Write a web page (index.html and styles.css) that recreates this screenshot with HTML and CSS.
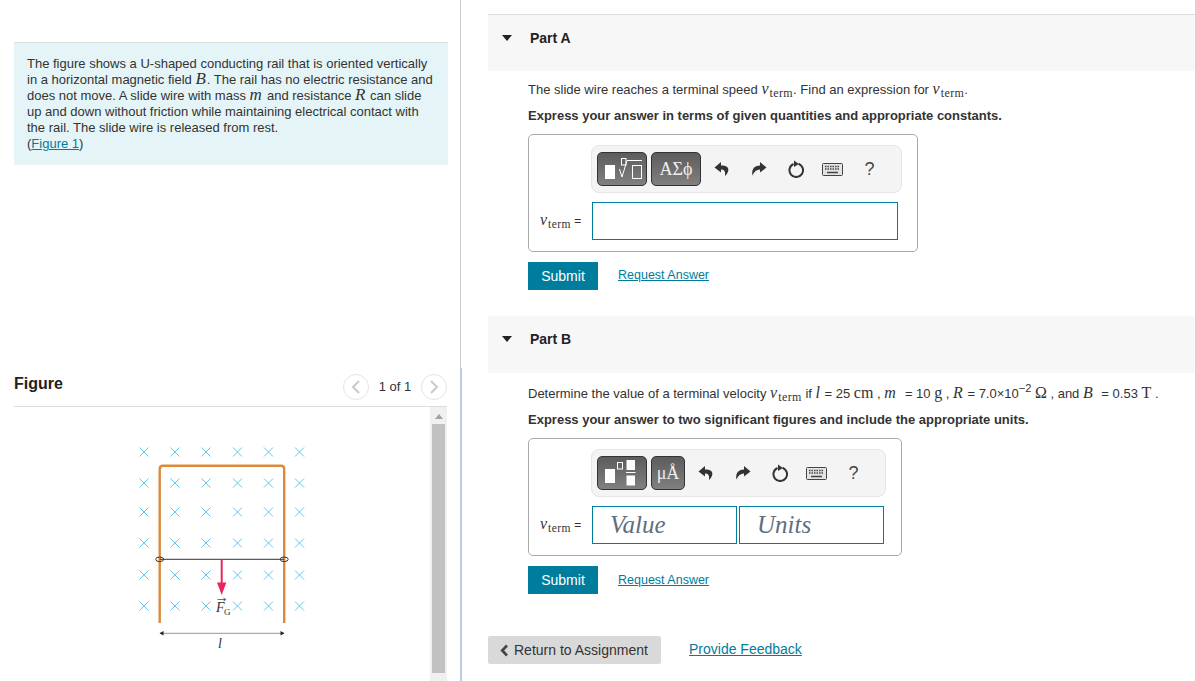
FILE: index.html
```html
<!DOCTYPE html>
<html lang="en">
<head>
    <meta charset="UTF-8">
    <title>Part A and Part B</title>
    <link rel="stylesheet" href="styles.css">
</head>
<body>
    <div class="left">
        <div class="intro-pane">
            <div class="intro">
                The figure shows a U-shaped conducting rail that is oriented vertically<br>
                in a horizontal magnetic field <i class="math big">B</i>. The rail has no electric resistance and<br>
                does not move. A slide wire with mass <i class="math big wide-m">m</i> and resistance <i class="math big">R</i> can slide<br>
                up and down without friction while maintaining electrical contact with<br>
                the rail. The slide wire is released from rest.<br>
                (<a href="#">Figure 1</a>)
            </div>
        </div>
        <div class="figure-pane">
            <div class="figure-head">
                <h2>Figure</h2>
                <div class="pager">
                    <span class="pager-btn"><svg width="10" height="14" viewBox="0 0 10 14"><path d="M8 1 L2 7 L8 13" fill="none" stroke="#c9c9c9" stroke-width="2"/></svg></span>
                    <span class="pager-text">1 of 1</span>
                    <span class="pager-btn"><svg width="10" height="14" viewBox="0 0 10 14"><path d="M2 1 L8 7 L2 13" fill="none" stroke="#c9c9c9" stroke-width="2"/></svg></span>
                </div>
            </div>
            <div class="figure-body">
                <div class="figure-canvas">
                    <svg class="rail-figure" width="200" height="230" viewBox="120 430 200 230">
                        <defs>
                            <path id="x" d="M-4.5 -4.5 L4.5 4.5 M4.5 -4.5 L-4.5 4.5" stroke="#62c8ee" stroke-width="1" fill="none"/>
                        </defs>
                        <g id="crosses">
                            <use href="#x" x="144" y="452"/><use href="#x" x="175" y="452"/><use href="#x" x="206" y="452"/><use href="#x" x="237.500" y="452"/><use href="#x" x="268.500" y="452"/><use href="#x" x="299.500" y="452"/>
                            <use href="#x" x="144" y="483"/><use href="#x" x="175" y="483"/><use href="#x" x="206" y="483"/><use href="#x" x="237.500" y="483"/><use href="#x" x="268.500" y="483"/><use href="#x" x="299.500" y="483"/>
                            <use href="#x" x="144" y="512"/><use href="#x" x="175" y="512"/><use href="#x" x="206" y="512"/><use href="#x" x="237.500" y="512"/><use href="#x" x="268.500" y="512"/><use href="#x" x="299.500" y="512"/>
                            <use href="#x" x="144" y="543"/><use href="#x" x="175" y="543"/><use href="#x" x="206" y="543"/><use href="#x" x="237.500" y="543"/><use href="#x" x="268.500" y="543"/><use href="#x" x="299.500" y="543"/>
                            <use href="#x" x="144" y="575"/><use href="#x" x="175" y="575"/><use href="#x" x="206" y="575"/><use href="#x" x="237.500" y="575"/><use href="#x" x="268.500" y="575"/><use href="#x" x="299.500" y="575"/>
                            <use href="#x" x="144" y="606"/><use href="#x" x="175" y="606"/><use href="#x" x="206" y="606"/><use href="#x" x="237.500" y="606"/><use href="#x" x="268.500" y="606"/><use href="#x" x="299.500" y="606"/>
                        </g>
                        <path d="M159.700 623 V469 Q159.700 465.800 163 465.800 H281 Q284.200 465.800 284.200 469 V623" fill="none" stroke="#dd8a3c" stroke-width="2.400"/>
                        <path d="M159.700 559.300 H284.200" stroke="#333" stroke-width="1"/>
                        <ellipse cx="159.700" cy="559.300" rx="4" ry="2.300" fill="none" stroke="#333" stroke-width="1"/>
                        <ellipse cx="284.200" cy="559.300" rx="4" ry="2.300" fill="none" stroke="#333" stroke-width="1"/>
                        <path d="M221.700 559.500 V583" stroke="#e8265e" stroke-width="2"/>
                        <path d="M217 582.500 H226.400 L221.700 595 Z" fill="#e8265e"/>
                        <path d="M160 633.300 H284" stroke="#999" stroke-width="1"/>
                        <path d="M159.500 633.300 L163.500 631 V635.600 Z M284.500 633.300 L280.500 631 V635.600 Z" fill="#222"/>
                        <path d="M217.500 599.500 H225 M223.500 598 L226 599.500 L223.500 601" fill="none" stroke="#333" stroke-width="0.700"/>
                        <text class="fig-f" x="216" y="612">F</text>
                        <text class="fig-g" x="224" y="615">G</text>
                        <text class="fig-f" x="218" y="648">l</text>
                    </svg>
                </div>
                <div class="scrollbar">
                    <span class="scroll-up"></span>
                    <span class="scroll-thumb"></span>
                </div>
            </div>
        </div>
    </div>

    <div class="right">
        <div class="part-head part-a">
            <span class="caret"></span>
            <h3>Part A</h3>
        </div>
        <div class="part-body">
            <p class="question">The slide wire reaches a terminal speed <i class="math">v</i><sub class="term">term</sub>. Find an expression for <i class="math">v</i><sub class="term">term</sub>.</p>
            <p class="instruction">Express your answer in terms of given quantities and appropriate constants.</p>
            <div class="answer-box box-a">
                <div class="toolbar toolbar-a">
                    <span class="tool-btn wide">
                        <svg width="50" height="34" viewBox="0 0 50 34"><rect x="8" y="13" width="10" height="14" fill="#fff"/><rect x="24.500" y="6.500" width="4.500" height="6.500" fill="none" stroke="#fff"/><path d="M22.500 17 L25 25 L30 8.500 H45" fill="none" stroke="#fff"/><rect x="35.500" y="13.500" width="9" height="13" fill="none" stroke="#fff"/></svg>
                    </span>
                    <span class="tool-btn greek">ΑΣϕ</span>
                    <span class="tool-icons">
                        <span class="slot"><svg width="16" height="16" viewBox="0 0 16 16"><path d="M7 1 L0.500 6.500 L7 11.500 V8.500 C10.500 8.500 11.500 10.500 11 15 C14 12.500 15 9 14 7 C13 5 10 4.500 7 4.500 Z" fill="#333"/></svg></span>
                        <span class="slot"><svg width="16" height="16" viewBox="0 0 16 16"><path d="M9 1 L15.500 6.500 L9 11.500 V8.500 C5.500 8.500 3 10.500 1.500 14.500 C0.500 10 2 4.500 9 4.500 Z" fill="#333"/></svg></span>
                        <span class="slot"><svg width="18" height="18" viewBox="0 0 18 18"><path d="M6.500 4 A6.800 6.800 0 1 0 11.500 3.800" fill="none" stroke="#333" stroke-width="2"/><path d="M7 0.500 L11.800 4 L7 7 Z" fill="#333"/></svg></span>
                        <span class="slot"><svg width="21" height="13" viewBox="0 0 21 13"><rect x="0.500" y="0.500" width="20" height="12" rx="1" fill="#e4e4e4" stroke="#444"/><path d="M3 3.500 H18 M3 6 H18" stroke="#444" stroke-dasharray="1.500 1" stroke-width="1.500"/><path d="M5 9.500 H16" stroke="#444" stroke-width="1.500"/></svg></span>
                        <span class="slot help">?</span>
                    </span>
                </div>
                <div class="answer-row">
                    <label class="var-label"><i class="math">v</i><sub class="term">term</sub> =</label>
                    <span class="input input-full"></span>
                </div>
            </div>
            <div class="actions">
                <button class="submit">Submit</button>
                <a class="request" href="#">Request Answer</a>
            </div>
        </div>

        <div class="part-head part-b">
            <span class="caret"></span>
            <h3>Part B</h3>
        </div>
        <div class="part-body">
            <p class="question q-b">Determine the value of a terminal velocity <i class="math">v</i><sub class="term">term</sub> if <i class="math">l</i> = 25 <span class="unit">cm</span> , <i class="math wide-m gap">m</i> = 10 <span class="unit">g</span> , <i class="math">R</i> = 7.0×10<sup class="exp">−2</sup> <span class="unit">Ω</span> , and <i class="math gap">B</i> = 0.53 <span class="unit">T</span> .</p>
            <p class="instruction">Express your answer to two significant figures and include the appropriate units.</p>
            <div class="answer-box box-b">
                <div class="toolbar toolbar-b">
                    <span class="tool-btn wide">
                        <svg width="50" height="34" viewBox="0 0 50 34"><rect x="8" y="13" width="10" height="14" fill="#fff"/><rect x="20.500" y="6.500" width="5" height="6.500" fill="none" stroke="#fff"/><rect x="29.500" y="4" width="8.500" height="10" fill="#fff"/><path d="M29 16.500 H38.500" stroke="#fff"/><rect x="29.500" y="19.500" width="8.500" height="10" fill="#fff"/></svg>
                    </span>
                    <span class="tool-btn units-btn">μÅ</span>
                    <span class="tool-icons">
                        <span class="slot"><svg width="16" height="16" viewBox="0 0 16 16"><path d="M7 1 L0.500 6.500 L7 11.500 V8.500 C10.500 8.500 11.500 10.500 11 15 C14 12.500 15 9 14 7 C13 5 10 4.500 7 4.500 Z" fill="#333"/></svg></span>
                        <span class="slot"><svg width="16" height="16" viewBox="0 0 16 16"><path d="M9 1 L15.500 6.500 L9 11.500 V8.500 C5.500 8.500 3 10.500 1.500 14.500 C0.500 10 2 4.500 9 4.500 Z" fill="#333"/></svg></span>
                        <span class="slot"><svg width="18" height="18" viewBox="0 0 18 18"><path d="M6.500 4 A6.800 6.800 0 1 0 11.500 3.800" fill="none" stroke="#333" stroke-width="2"/><path d="M7 0.500 L11.800 4 L7 7 Z" fill="#333"/></svg></span>
                        <span class="slot"><svg width="21" height="13" viewBox="0 0 21 13"><rect x="0.500" y="0.500" width="20" height="12" rx="1" fill="#e4e4e4" stroke="#444"/><path d="M3 3.500 H18 M3 6 H18" stroke="#444" stroke-dasharray="1.500 1" stroke-width="1.500"/><path d="M5 9.500 H16" stroke="#444" stroke-width="1.500"/></svg></span>
                        <span class="slot help">?</span>
                    </span>
                </div>
                <div class="answer-row">
                    <label class="var-label"><i class="math">v</i><sub class="term">term</sub> =</label>
                    <span class="input input-half">Value</span>
                    <span class="input input-half">Units</span>
                </div>
            </div>
            <div class="actions actions-b">
                <button class="submit">Submit</button>
                <a class="request" href="#">Request Answer</a>
            </div>
        </div>

        <div class="footer">
            <button class="return"><svg width="9" height="13" viewBox="0 0 9 13"><path d="M7 1.500 L2.200 6.500 L7 11.500" fill="none" stroke="#444" stroke-width="2.600"/></svg>Return to Assignment</button>
            <a class="feedback" href="#">Provide Feedback</a>
        </div>
    </div>
</body>
</html>
```

FILE: styles.css
```css
html, body {
    height: 681px;
    overflow: hidden;
}

body {
    margin: 0;
    display: flex;
    font-family: 'Liberation Sans', Arial, sans-serif;
    font-size: 13px;
    color: #333;
    background-color: #fff;
}

a {
    color: #007c9c;
    text-decoration: underline;
}

.math {
    font-family: 'Liberation Serif', serif;
    font-style: italic;
    font-size: 16px;
    line-height: 0;
    padding-right: 1px;
}

.math.big {
    font-size: 17px;
}

.wide-m {
    letter-spacing: 0.5px;
}

.gap {
    margin-right: 4px;
}

.term {
    font-family: 'Liberation Serif', serif;
    font-size: 12px;
    line-height: 0;
    vertical-align: -3px;
    letter-spacing: 0.4px;
}

.unit {
    font-family: 'Liberation Serif', serif;
    font-size: 16px;
    line-height: 0;
}

.exp {
    font-size: 11px;
    line-height: 0;
    vertical-align: 6px;
}

/* left column */
.left {
    width: 462px;
    flex: none;
}

.intro-pane {
    height: 326px;
    padding: 42px 0 0 14px;
    border-right: 1px solid #ccc;
    width: 446px;
}

.intro {
    width: 408px;
    padding: 13px 13px 13px;
    background-color: #e5f5f7;
    border-top: 1px solid #dcdcdc;
    line-height: 16px;
    white-space: nowrap;
}

.figure-pane {
    height: 313px;
    width: 446px;
    padding-left: 14px;
    border-right: 2px solid #b9cde3;
}

.figure-head {
    width: 433px;
    height: 38px;
    display: flex;
    justify-content: space-between;
    border-bottom: 1px solid #ddd;
}

.figure-head h2 {
    margin: 6px 0 0;
    font-size: 16px;
    line-height: 19px;
    color: #222;
}

.pager {
    display: flex;
    align-items: flex-start;
    margin-top: 6px;
}

.pager-btn {
    width: 24px;
    height: 24px;
    border: 1px solid #e4e4e4;
    border-radius: 50%;
    display: flex;
    align-items: center;
    justify-content: center;
}

.pager-text {
    width: 52px;
    text-align: center;
    line-height: 26px;
}

.figure-body {
    width: 433px;
    height: 274px;
    display: flex;
    overflow: hidden;
}

.figure-canvas {
    width: 416px;
    flex: none;
}

.rail-figure {
    display: block;
    margin: 23px 0 0 106px;
}

.fig-f {
    font-family: 'Liberation Serif', serif;
    font-style: italic;
    font-size: 14px;
    fill: #333;
}

.fig-g {
    font-family: 'Liberation Serif', serif;
    font-size: 9px;
    fill: #333;
}

.scrollbar {
    width: 17px;
    height: 274px;
    background-color: #f0f0f0;
    display: flex;
    flex-direction: column;
    align-items: center;
}

.scroll-up {
    margin-top: 7px;
    border-left: 4px solid transparent;
    border-right: 4px solid transparent;
    border-bottom: 5px solid #a3a3a3;
}

.scroll-thumb {
    width: 13px;
    height: 249px;
    margin-top: 5px;
    background-color: #c1c1c1;
}

/* right column */
.right {
    flex: 1;
    padding: 14px 0 0 26px;
}

.part-head {
    height: 57px;
    background-color: #f7f7f7;
    display: flex;
    align-items: flex-start;
    padding-left: 14px;
    box-sizing: border-box;
}

.part-a {
    border-top: 1px solid #ddd;
}

.part-head h3 {
    margin: 15px 0 0 18px;
    font-size: 14px;
    line-height: 16px;
    color: #222;
}

.caret {
    width: 0;
    height: 0;
    margin-top: 20px;
    border-left: 5.5px solid transparent;
    border-right: 5.5px solid transparent;
    border-top: 6px solid #222;
}

.part-body {
    padding-left: 40px;
}

.question {
    margin: 11px 0 0;
    line-height: 16px;
    white-space: nowrap;
}

.instruction {
    margin: 10px 0 0;
    line-height: 16px;
    font-weight: bold;
    white-space: nowrap;
}

.answer-box {
    margin-top: 10px;
    padding-top: 10px;
    border: 1px solid #aaa;
    border-radius: 5px;
    height: 106px;
}

.box-a {
    width: 388px;
}

.box-b {
    width: 372px;
}

.toolbar {
    margin-left: 62px;
    height: 46px;
    display: flex;
    align-items: center;
    padding-left: 5px;
    background-color: #f4f4f4;
    border: 1px solid #e5e5e5;
    border-radius: 8px;
}

.toolbar-a {
    width: 304px;
}

.toolbar-b {
    width: 288px;
}

.tool-btn {
    height: 32px;
    border: 1px solid #333;
    border-radius: 5px;
    background-image: linear-gradient(#5c5c5c, #808080);
    color: #eee;
    font-family: 'Liberation Serif', serif;
    display: flex;
    align-items: center;
    justify-content: center;
    margin-right: 4px;
}

.tool-btn.wide {
    width: 48px;
}

.tool-btn.wide svg {
    margin: -1px;
}

.greek {
    width: 48px;
    font-size: 18px;
    margin-right: 0;
}

.units-btn {
    width: 32px;
    font-size: 18px;
    margin-right: 0;
}

.tool-icons {
    display: flex;
    align-items: center;
    margin-left: 2px;
}

.slot {
    width: 37px;
    display: flex;
    align-items: center;
    justify-content: center;
}

.help {
    font-size: 18px;
    color: #444;
}

.answer-row {
    display: flex;
    align-items: center;
    margin-top: 9px;
    height: 38px;
}

.var-label {
    width: 63px;
    padding-left: 11px;
    box-sizing: border-box;
    font-size: 12px;
    white-space: nowrap;
}

.var-label .term {
    font-size: 11.5px;
}

.input {
    height: 38px;
    box-sizing: border-box;
    border: 1px solid #007c9c;
    display: block;
    font-family: 'Liberation Serif', serif;
    font-style: italic;
    font-size: 25px;
    line-height: 36px;
    color: #5f6f7f;
    padding-left: 17px;
}

.input-full {
    width: 306px;
}

.input-half {
    width: 145px;
    margin-right: 2px;
}

.actions {
    display: flex;
    align-items: center;
    margin-top: 10px;
}

.submit {
    width: 70px;
    height: 28px;
    padding: 0;
    border: none;
    background-color: #007c9c;
    color: #fff;
    font-family: inherit;
    font-size: 14px;
}

.request {
    margin: 0 0 2px 20px;
    font-size: 12.5px;
}

.actions-b .request {
    margin-bottom: 0;
}

.part-b {
    margin-top: 26px;
}

.q-b {
    margin-top: 13px;
}

.footer {
    display: flex;
    align-items: center;
    margin: 42px 0 0 0;
}

.return {
    width: 173px;
    height: 28px;
    padding: 0 0 0 12px;
    border: none;
    border-radius: 2px;
    background-color: #d9d9d9;
    color: #333;
    font-family: inherit;
    font-size: 14px;
    display: flex;
    align-items: center;
    gap: 5px;
}

.feedback {
    margin: 0 0 2px 28px;
    font-size: 14px;
}
```
